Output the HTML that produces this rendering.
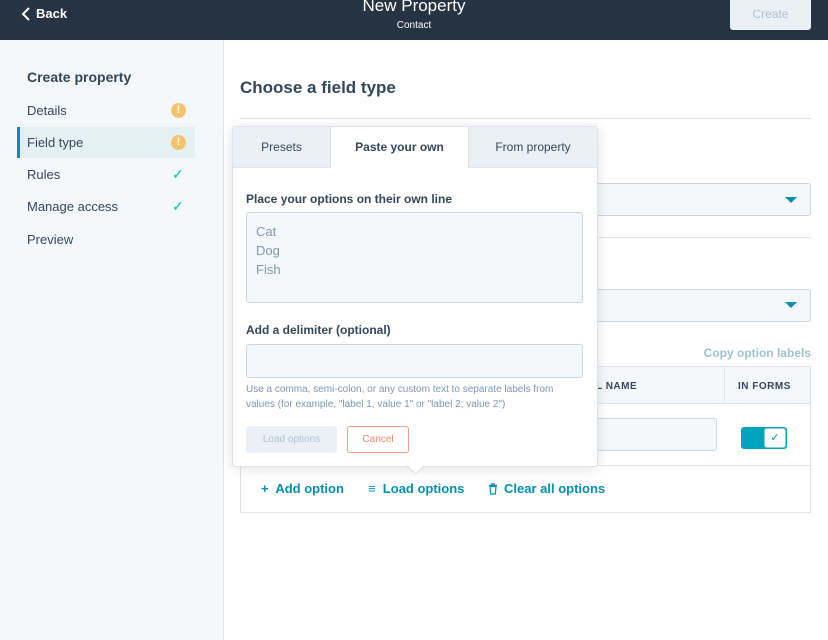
<!DOCTYPE html>
<html><head><style>
*{box-sizing:border-box;margin:0;padding:0}
body{width:828px;height:640px;overflow:hidden;font-family:"Liberation Sans",sans-serif;color:#33475b;background:#fff;position:relative}
.abs{position:absolute}
.hdr{left:0;top:0;width:828px;height:40px;background:#253342}
.side{left:0;top:40px;width:224px;height:600px;background:#f5f8fa;border-right:1px solid #dfe3eb}
.nav{left:27px;font-size:13px;color:#33475b}
.warn{width:15px;height:15px;border-radius:50%;background:#f5c26b;color:#fff;font-size:11px;font-weight:bold;text-align:center;line-height:15px}
.chk{color:#00bda5;font-size:14px}
.sel{background:#f5f8fa;border:1px solid #cbd6e2;border-radius:3px}
.tri{width:0;height:0;border-left:6px solid transparent;border-right:6px solid transparent;border-top:6px solid #0091ae}
.link{color:#0091ae;font-weight:bold;font-size:13px}
</style></head><body>
<div class="abs hdr"></div>
<svg class="abs" style="left:20px;top:6px" width="12" height="16"><path d="M9 2 L3 8 L9 14" stroke="#fff" stroke-width="2" fill="none"/></svg>
<div class="abs" style="left:36px;top:6px;color:#fff;font-weight:bold;font-size:13px">Back</div>
<div class="abs" style="left:300px;width:228px;top:-4px;text-align:center;color:#fff;font-size:17px">New Property</div>
<div class="abs" style="left:300px;width:228px;top:20px;text-align:center;color:#fff;font-size:10px">Contact</div>
<div class="abs" style="left:730px;top:0;width:81px;height:30px;background:#eaf0f6;border-radius:0 0 3px 3px;color:#b0c1d4;font-size:12px;text-align:center;line-height:28px">Create</div>

<div class="abs side"></div>
<div class="abs" style="left:27px;top:69px;font-size:14px;font-weight:bold">Create property</div>
<div class="abs nav" style="top:103px">Details</div>
<div class="abs warn" style="left:171px;top:103px">!</div>
<div class="abs" style="left:17px;top:127px;width:178px;height:31px;background:#e5f0f4;border-left:3px solid #0091ae"></div>
<div class="abs nav" style="top:135px">Field type</div>
<div class="abs warn" style="left:171px;top:135px">!</div>
<div class="abs nav" style="top:167px">Rules</div>
<div class="abs chk" style="left:172px;top:166px">✓</div>
<div class="abs nav" style="top:199px">Manage access</div>
<div class="abs chk" style="left:172px;top:198px">✓</div>
<div class="abs nav" style="top:232px">Preview</div>

<div class="abs" style="left:240px;top:78px;font-size:17px;font-weight:bold">Choose a field type</div>
<div class="abs" style="left:240px;top:118px;width:571px;height:1px;background:#dfe3eb"></div>
<div class="abs sel" style="left:560px;top:183px;width:251px;height:33px"></div>
<div class="abs tri" style="left:785px;top:197px"></div>
<div class="abs" style="left:560px;top:237px;width:251px;height:1px;background:#dfe3eb"></div>
<div class="abs sel" style="left:560px;top:289px;width:251px;height:33px"></div>
<div class="abs tri" style="left:785px;top:302px"></div>
<div class="abs" style="left:600px;width:211px;top:346px;text-align:right;font-size:12px;font-weight:bold;color:#9fc3d0">Copy option labels</div>
<div class="abs" style="left:240px;top:366px;width:571px;height:147px;border:1px solid #dfe3eb"></div>
<div class="abs" style="left:241px;top:367px;width:569px;height:37px;background:#f5f8fa;border-bottom:1px solid #dfe3eb"></div>
<div class="abs" style="left:724px;top:367px;width:1px;height:37px;background:#dfe3eb"></div>
<div class="abs" style="left:596px;top:381px;font-size:10px;font-weight:bold;letter-spacing:.5px">L NAME</div>
<div class="abs" style="left:738px;top:381px;font-size:10px;font-weight:bold;letter-spacing:.5px">IN FORMS</div>
<div class="abs sel" style="left:580px;top:418px;width:137px;height:33px"></div>
<div class="abs" style="left:741px;top:427px;width:46px;height:22px;background:#00a4bd;border-radius:3px"></div>
<div class="abs" style="left:764px;top:428px;width:22px;height:20px;background:#fff;border:1px solid #7fd1de;border-radius:3px;color:#0091ae;font-size:11px;text-align:center;line-height:18px">✓</div>
<div class="abs" style="left:241px;top:465px;width:569px;height:1px;background:#dfe3eb"></div>
<div class="abs link" style="left:261px;top:481px">+&nbsp; Add option</div>
<div class="abs link" style="left:368px;top:481px">≡&nbsp; Load options</div>
<svg class="abs" style="left:488px;top:483px" width="10" height="12"><path d="M1 2.5h8M3.5 2.5V1h3v1.5M2 3.5l.7 7.5h4.6l.7-7.5z" stroke="#0091ae" stroke-width="1.2" fill="none"/></svg>
<div class="abs link" style="left:504px;top:481px">Clear all options</div>

<div class="abs" style="left:232px;top:126px;width:366px;height:341px;background:#fff;border:1px solid #dfe3eb;border-radius:3px;box-shadow:0 2px 12px rgba(0,0,0,.12)"></div>
<div class="abs" style="left:409px;top:459px;width:13px;height:13px;background:#fff;transform:rotate(45deg);border-right:1px solid #dfe3eb;border-bottom:1px solid #dfe3eb"></div>
<div class="abs" style="left:233px;top:127px;width:98px;height:41px;background:#eaf0f6;border-bottom:1px solid #dfe3eb;border-right:1px solid #dfe3eb;font-size:12px;text-align:center;line-height:41px">Presets</div>
<div class="abs" style="left:331px;top:127px;width:137px;height:41px;font-size:12px;font-weight:bold;text-align:center;line-height:41px">Paste your own</div>
<div class="abs" style="left:468px;top:127px;width:129px;height:41px;background:#eaf0f6;border-bottom:1px solid #dfe3eb;border-left:1px solid #dfe3eb;font-size:12px;text-align:center;line-height:41px">From property</div>
<div class="abs" style="left:246px;top:192px;font-size:12px;font-weight:bold">Place your options on their own line</div>
<div class="abs sel" style="left:246px;top:212px;width:337px;height:91px;padding:9px;font-size:13px;color:#8197b0;line-height:19px">Cat<br>Dog<br>Fish</div>
<div class="abs" style="left:246px;top:323px;font-size:12px;font-weight:bold">Add a delimiter (optional)</div>
<div class="abs sel" style="left:246px;top:344px;width:337px;height:34px"></div>
<div class="abs" style="left:246px;top:382px;width:337px;font-size:10px;color:#7c98b6;line-height:15px">Use a comma, semi-colon, or any custom text to separate labels from values (for example, "label 1, value 1" or "label 2; value 2")</div>
<div class="abs" style="left:246px;top:426px;width:91px;height:27px;background:#eaf0f6;border-radius:3px;color:#b0c1d4;font-size:10px;text-align:center;line-height:27px">Load options</div>
<div class="abs" style="left:347px;top:426px;width:62px;height:27px;border:1px solid #f2a08a;border-radius:3px;color:#f2876a;font-size:10px;text-align:center;line-height:25px">Cancel</div>
</body></html>
